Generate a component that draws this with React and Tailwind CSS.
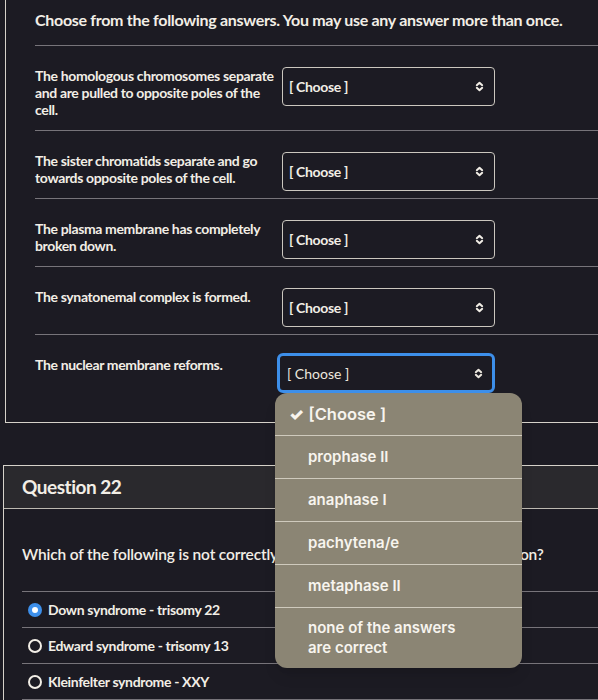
import React from "react";

const matches = [
  { text: "The homologous chromosomes separate and are pulled to opposite poles of the cell.", pb: "pb-[12px]" },
  { text: "The sister chromatids separate and go towards opposite poles of the cell.", pb: "pb-[7px]" },
  { text: "The plasma membrane has completely broken down.", pb: "pb-[7px]" },
  { text: "The synatonemal complex is formed.", pb: "pb-[7px]" },
  { text: "The nuclear membrane reforms.", pb: "pb-[29px]", focused: true },
];

const options = ["prophase II", "anaphase I", "pachytena/e", "metaphase II", "none of the answers are correct"];

const answers = [
  { text: "Down syndrome - trisomy 22", checked: true },
  { text: "Edward syndrome - trisomy 13" },
  { text: "Kleinfelter syndrome - XXY" },
];

function UpDown({ className }) {
  return (
    <svg viewBox="0 0 10 12" className={className} fill="none" stroke="currentColor" strokeWidth="2.2" strokeLinecap="round" strokeLinejoin="round">
      <path d="M2 4.5 5 1.8 8 4.5" />
      <path d="M2 7.5 5 10.2 8 7.5" />
    </svg>
  );
}

function Select({ focused }) {
  if (focused) {
    return (
      <div className="w-[218px] h-[40px] -ml-[5px] -mt-[3px] rounded-md border-[3px] border-[#3d8fea] flex items-center justify-between pl-[7px] pr-[9px] text-[14px] text-[#ece8df]">
        <span>[ Choose ]</span>
        <UpDown className="w-[9px] h-[11px] text-[#ece8df]" />
      </div>
    );
  }
  return (
    <div className="w-[213px] h-[39px] rounded-sm border border-[#cbc7bf] flex items-center justify-between pl-[6px] pr-[10px] text-[14px] font-bold tracking-tight text-[#f2eee6]">
      <span>[ Choose ]</span>
      <UpDown className="w-[9px] h-[11px] text-[#f2eee6]" />
    </div>
  );
}

export default function App() {
  return (
    <div className="relative w-[598px] h-[700px] overflow-hidden bg-[#1c1b23] font-['Lato','Noto_Sans',sans-serif] text-[#f2eee6]">
      {/* Matching question card */}
      <div className="ml-[5px] w-[680px] border-l border-b border-[#d6d2ca] pt-[10px]">
        <div className="pl-[29px]">
          <p className="text-[16px] leading-[20px] font-bold tracking-[-0.3px]">
            Choose from the following answers. You may use any answer more than once.
          </p>
          <div className="mt-[15px]">
            {matches.map((m, i) => (
              <div key={i} className={`flex items-start border-t border-[#77747a] pt-[21px] ${m.pb}`}>
                <p className="w-[247px] pr-[6px] text-[14px] leading-[17px] font-bold tracking-tight">{m.text}</p>
                <Select focused={m.focused} />
              </div>
            ))}
          </div>
        </div>
      </div>

      {/* Question 22 */}
      <div className="mt-[42px] ml-[3px] w-[680px] border-l border-t border-[#d6d2ca]">
        <div className="h-[43px] bg-[#2a292d] border-b border-[#bdb9b1] flex items-center pl-[18px]">
          <h2 className="text-[19px] font-bold tracking-tight">Question 22</h2>
        </div>
        <div className="pl-[18px] pt-[35px]">
          <p className="text-[15.5px] leading-[20px] font-semibold tracking-[-0.15px] whitespace-nowrap">
            Which of the following is not correctly paired with its chromosomal condition?
          </p>
          <div className="mt-[27px]">
            {answers.map((a, i) => (
              <div key={i} className="flex items-center gap-[6px] h-[36px] border-t border-[#77747a] pl-[6px] text-[14px] font-bold tracking-tight">
                {a.checked ? (
                  <span className="w-[14px] h-[14px] rounded-full bg-[#3d8fea] flex items-center justify-center">
                    <span className="w-[6px] h-[6px] rounded-full bg-white" />
                  </span>
                ) : (
                  <span className="w-[14px] h-[14px] rounded-full border-2 border-[#f2eee6]" />
                )}
                <span>{a.text}</span>
              </div>
            ))}
            <div className="border-t border-[#77747a]" />
          </div>
        </div>
      </div>

      {/* Open select menu */}
      <div className="absolute left-[275px] top-[393px] w-[247px] rounded-[12px] bg-[#8b8574] shadow-lg font-['Inter','Liberation_Sans',sans-serif] text-[15px] font-semibold text-[#f7f4ee] overflow-hidden">
        <div className="h-[42px] flex items-center pl-[14px] gap-[5px] text-[16.5px]">
          <span className="font-black">✓</span>
          <span>[Choose ]</span>
        </div>
        {options.map((o) => (
          <div key={o} className="min-h-[43px] border-t border-[#cfcabd] flex items-center pl-[33px] pr-[40px] py-[10px] leading-[20px]">
            {o}
          </div>
        ))}
      </div>
    </div>
  );
}
